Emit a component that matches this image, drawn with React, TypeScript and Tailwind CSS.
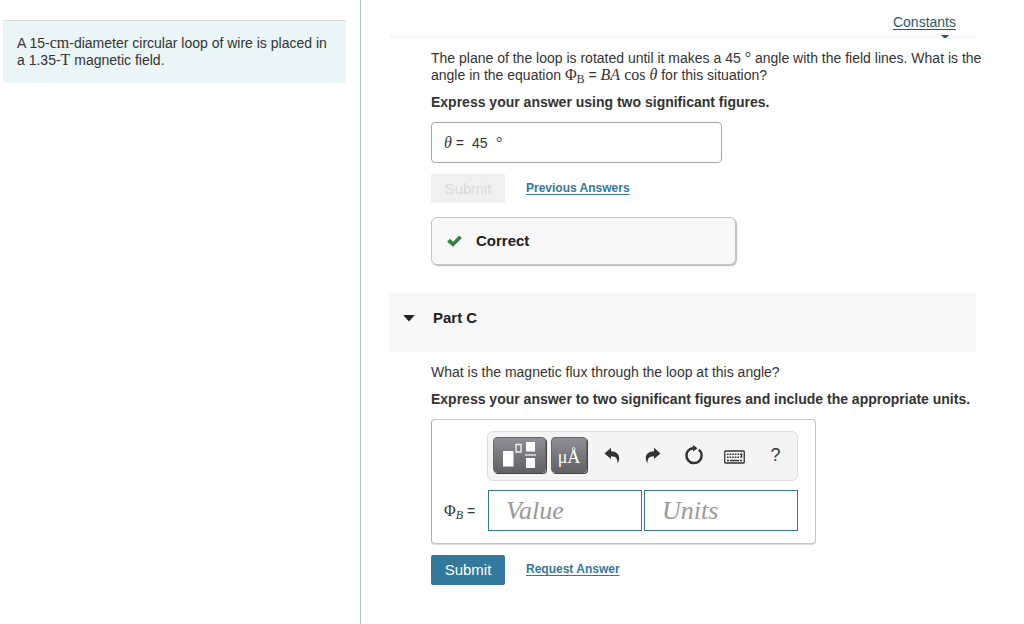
import { useState, type ReactNode } from "react";

function MathText({ children }: { children: ReactNode }) {
  return (
    <span className="font-['Liberation_Serif',serif] text-base leading-none">
      {children}
    </span>
  );
}

export default function App() {
  return (
    <div className="flex min-h-screen bg-white font-['Liberation_Sans',Arial,sans-serif] text-sm text-[#333]">
      <aside className="w-[361px] shrink-0 border-r border-[#b4c6d6] pt-5 pr-3.5 pl-[3px]">
        <p className="border-t border-[#dcdcdc] bg-[#eaf5f7] px-3.5 py-3.5 leading-[17px]">
          A 15-<MathText>cm</MathText>-diameter circular loop of wire is placed in
          a 1.35-<MathText>T</MathText> magnetic field.
        </p>
      </aside>

      <main className="min-w-0 flex-1 pr-12 pl-7">
        <header className="flex h-[39px] flex-col items-end justify-end">
          <a href="#constants" className="mr-5 pb-[3px] text-[#1f5c70] underline underline-offset-2">
            Constants
          </a>
          <div className="flex h-1 w-full justify-end bg-[#f8f8f8] pr-[27px]">
            <svg width="8" height="3" viewBox="0 0 8 3" aria-hidden="true">
              <path d="M0.5 0h7v0.6L5 3H3L0.5 0.6z" fill="#1f5c70" />
            </svg>
          </div>
        </header>
        <PartB />
        <PartC />
      </main>
    </div>
  );
}

function PartB() {
  return (
    <section className="pt-[11px] pl-[42px]">
      <p className="-mr-6 leading-[17px]">
        The plane of the loop is rotated until it makes a 45{" "}
        <MathText>°</MathText> angle with the field lines. What is the angle in
        the equation{" "}
        <MathText>
          Φ<sub className="text-xs leading-none">B</sub>
        </MathText>{" "}
        ={" "}
        <MathText>
          <i>BA</i> cos <i>θ</i>
        </MathText>{" "}
        for this situation?
      </p>
      <p className="mt-2.5 leading-[17px] font-bold">
        Express your answer using two significant figures.
      </p>

      <div className="mt-[11px] flex h-[41px] max-w-[291px] items-center rounded border border-[#a5a5a5] pl-3">
        <label htmlFor="theta" className="whitespace-pre">
          <MathText>
            <i>θ</i>
          </MathText>{" "}
          =
        </label>
        <input id="theta" className="ml-2 w-6 outline-none" value="45" readOnly />
        <MathText>°</MathText>
      </div>

      <div className="mt-[11px] flex items-start">
        <button
          type="button"
          disabled
          className="h-[29px] w-[74px] bg-[#f0f0f0] text-[15px] text-[#dadada]"
        >
          Submit
        </button>
        <a
          href="#previous"
          className="mt-[5px] ml-[21px] text-xs leading-[18px] font-bold text-[#33799b] underline underline-offset-2"
        >
          Previous Answers
        </a>
      </div>

      <div className="mt-3.5 flex h-12 max-w-[305px] items-center rounded-md border border-[#c4c4c4] bg-[#f8f8f8] pl-[15px] font-bold text-[#222] shadow-[1px_1px_1px_#bbb]">
        <svg width="15" height="12" viewBox="0 0 15 12" aria-hidden="true">
          <path
            d="M0.6 6.1 2.5 4.2Q3 3.8 3.5 4.2L6 6.7 11.7 0.9Q12.2 0.4 12.7 0.9L14.4 2.5Q14.8 3 14.4 3.5L6.6 11.2Q6 11.7 5.4 11.2L0.6 7Q0.2 6.5 0.6 6.1z"
            fill="#348343"
          />
        </svg>
        <span className="ml-3.5 text-[15px]">Correct</span>
      </div>
    </section>
  );
}

function PartC() {
  const [open, setOpen] = useState(true);

  return (
    <section className="mt-7">
      <h2 className="bg-[#f8f8f8] pb-6 text-[#222]">
        <button
          type="button"
          aria-expanded={open}
          onClick={() => setOpen(!open)}
          className="flex w-full items-center pt-[15px] pl-3.5 text-left text-[15px] leading-5 font-bold"
        >
          <svg width="12" height="8" viewBox="0 0 12 8" aria-hidden="true">
            <path d="M0.8 1h10.4q.6 0 .2.5L6.7 6.8q-.7.7-1.4 0L.6 1.5Q.2 1 .8 1z" fill="#222" />
          </svg>
          <span className="ml-[18px]">Part C</span>
        </button>
      </h2>

      {open && (
        <div className="pt-3 pl-[42px]">
          <p className="leading-[17px]">
            What is the magnetic flux through the loop at this angle?
          </p>
          <p className="mt-2.5 leading-[17px] font-bold">
            Express your answer to two significant figures and include the
            appropriate units.
          </p>
          <AnswerBox />
          <div className="mt-[11px] flex items-start">
            <button
              type="button"
              className="h-[30px] w-[74px] rounded-xs bg-[#33799b] text-[15px] text-white"
            >
              Submit
            </button>
            <a
              href="#request"
              className="mt-[5px] ml-[21px] text-xs leading-[18px] font-bold text-[#33799b] underline underline-offset-2"
            >
              Request Answer
            </a>
          </div>
        </div>
      )}
    </section>
  );
}

function AnswerBox() {
  return (
    <div className="mt-[11px] max-w-[385px] rounded border border-[#c4c4c4] border-l-[#aaa] pt-[11px] pr-[17px] pb-3 pl-3 shadow-[0_1px_0_#ddd]">
      <div className="ml-[43px] flex h-[50px] items-center rounded-md border border-[#dedede] bg-[#f4f4f4] pb-0.5 pl-[5px]">
        <button
          type="button"
          aria-label="Templates"
          className="flex h-9 w-[53px] items-center justify-center rounded border border-[#666] bg-linear-to-b from-[#918f96] to-[#626164] shadow-[1px_1px_0_#444]"
        >
          <svg width="34" height="28" viewBox="0 0 34 28" fill="#fff" className="shrink-0" aria-hidden="true">
            <path d="M0 10h10.5v15.5H0zM23 1h9v9.5h-9zM23 17h9v10h-9z" />
            <path d="M22 13h11v2H22z" fill="#c6c6c9" />
            <path d="M13 3.5h5v7.5h-5z" fill="none" stroke="#eee" strokeWidth="1.4" />
          </svg>
        </button>
        <button
          type="button"
          aria-label="Symbols"
          className="ml-[5px] h-9 w-9 rounded border border-[#666] bg-linear-to-b from-[#918f96] to-[#626164] pt-1 font-['Liberation_Serif',serif] text-lg text-white shadow-[1px_1px_0_#444]"
        >
          μÅ
        </button>
        <div className="ml-1 grid grid-cols-[repeat(5,41px)] items-center justify-items-center text-[#333]">
          <button type="button" aria-label="Undo">
            <UndoIcon />
          </button>
          <button type="button" aria-label="Redo" className="-scale-x-100">
            <UndoIcon />
          </button>
          <button type="button" aria-label="Reset">
            <svg width="20" height="20" viewBox="0 0 20 20" aria-hidden="true">
              <path d="M14.8 4.6A7.6 7.6 0 1 1 5.8 4.2L9.8 3" fill="none" stroke="#333" strokeWidth="2.5" />
              <path d="M9 0v6.6L13.6 3.3z" fill="#333" />
            </svg>
          </button>
          <button type="button" aria-label="Keyboard" className="pt-1">
            <KeyboardIcon />
          </button>
          <button type="button" aria-label="Help" className="w-5 text-lg leading-5">
            ?
          </button>
        </div>
      </div>

      <div className="mt-[9px] flex items-center">
        <label htmlFor="flux" className="w-11 shrink-0 font-['Liberation_Serif',serif] text-base leading-none whitespace-nowrap">
          Φ
          <sub className="text-xs leading-none">
            <i>B</i>
          </sub>{" "}
          <span className="font-['Liberation_Sans',sans-serif] text-sm leading-none">=</span>
        </label>
        <div className="grid flex-1 grid-cols-2 gap-0.5">
          <input
            id="flux"
            placeholder="Value"
            className="h-[41px] min-w-0 border border-[#33799b] pl-[17px] font-['Liberation_Serif',serif] text-[26px] italic outline-none placeholder:text-[#999]"
          />
          <input
            aria-label="Units"
            placeholder="Units"
            className="h-[41px] min-w-0 border border-[#33799b] pl-[17px] font-['Liberation_Serif',serif] text-[26px] italic outline-none placeholder:text-[#999]"
          />
        </div>
      </div>
    </div>
  );
}

function UndoIcon() {
  return (
    <svg width="16" height="17" viewBox="0 0 16 17" fill="#333" aria-hidden="true">
      <path d="M0.5 6.5 7 0.8V4.2C12 4.2 15.8 7.5 15.2 12Q15 14.5 13.4 16.4C13.8 12 12.3 9.2 7 9.2V12z" />
    </svg>
  );
}

function KeyboardIcon() {
  return (
    <svg width="21" height="14" viewBox="0 0 21 14" fill="none" stroke="#333" aria-hidden="true">
      <rect x="0.75" y="1" width="19.5" height="12" rx="0.8" strokeWidth="1.3" />
      <path d="M3 4.2h15M3 7.2h13.5" strokeWidth="1.6" strokeDasharray="1.6 1" />
      <path d="M17.5 3.5v4.2M3 10.4h2M6 10.4h9M16 10.4h2" strokeWidth="1.5" />
    </svg>
  );
}
